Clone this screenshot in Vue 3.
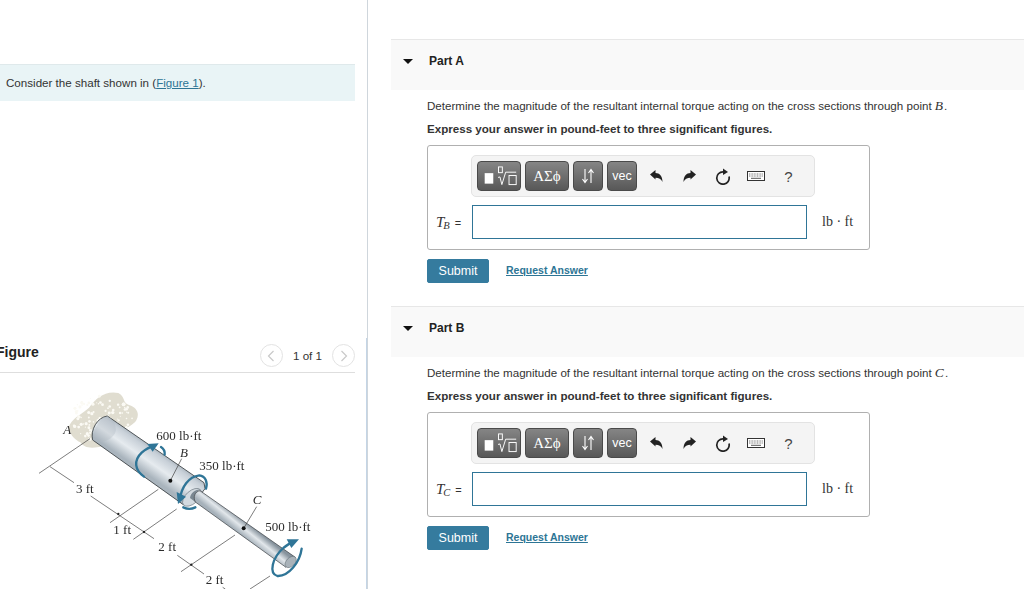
<script setup>
const parts = [
  { name: 'Part A', point: 'B' },
  { name: 'Part B', point: 'C' },
]
let seed = 7
const rnd = () => {
  seed = (seed * 16807) % 2147483647
  return seed / 2147483647
}
const dots = Array.from({ length: 110 }, () => {
  const a = rnd() * 6.283
  const r = Math.sqrt(rnd())
  return { x: 305 + Math.cos(a) * r * 95, y: 265 + Math.sin(a) * r * 68, r: 1.5 + rnd() * 3.5 }
})
</script>

<template>
  <div class="page">
    <section class="left">
      <div class="banner">Consider the shaft shown in (<a class="link">Figure 1</a>).</div>
      <div class="figure">
        <header class="fig-head">
          <h2>Figure</h2>
          <div class="pager">
            <span class="circle">
              <svg width="8" height="12" viewBox="0 0 8 12"><path d="M6.5 1 1.5 6l5 5" /></svg>
            </span>
            <span class="count">1 of 1</span>
            <span class="circle">
              <svg width="8" height="12" viewBox="0 0 8 12"><path d="M1.5 1l5 5-5 5" /></svg>
            </span>
          </div>
        </header>
        <svg class="drawing" width="355" height="216" viewBox="0 129 1065 648">
          <defs>
            <linearGradient id="big" gradientUnits="userSpaceOnUse" x1="478" y1="352" x2="428" y2="424">
              <stop offset="0" stop-color="#9aa6b0" />
              <stop offset="0.25" stop-color="#c8d0d8" />
              <stop offset="0.6" stop-color="#e6ebef" />
              <stop offset="1" stop-color="#a9b4bd" />
            </linearGradient>
            <linearGradient id="small" gradientUnits="userSpaceOnUse" x1="746" y1="582" x2="722" y2="612">
              <stop offset="0" stop-color="#87939d" />
              <stop offset="0.5" stop-color="#e2e7eb" />
              <stop offset="1" stop-color="#a6b1ba" />
            </linearGradient>
          </defs>
          <path d="M205 295c8-32 42-42 62-62 20-28 48-52 88-44 22 12 12 30 32 36 26 8 32 28 22 46-8 14-30 20-40 34-18 22-44 40-72 46-30 6-46 0-56-14-14-6-28-18-36-42z" fill="#e0ddd0" />
          <circle v-for="(d, i) in dots" :key="i" :cx="d.x" :cy="d.y" :r="d.r" fill="#fbfaf4" />
          <g class="dims">
            <path d="M117 430 270 326M150 410 222 458M272 498 462 626M532 676 612 732M668 772 676 777M330 578 475 478M400 628 530 537M543 725 705 615M750 777 810 738" />
          </g>
          <path d="M322 258 612 458 615 476 583 518 550 524 278 330C270 300 292 262 322 258z" fill="url(#big)" stroke="#33383c" stroke-width="2.5" />
          <path d="M322 258C300 262 280 296 278 330 300 340 330 336 345 310 352 296 345 270 322 258z" fill="#aeb8c1" opacity="0.35" />
          <ellipse cx="576" cy="502" rx="34" ry="19" transform="rotate(-42 576 502)" fill="#d3dae0" stroke="#6f7a83" stroke-width="2" />
          <path d="M602 478C586 484 578 500 586 516L570 504C572 490 586 478 602 478z" fill="#7a8791" />
          <path d="M600 482 886 682 858 712 586 516C578 500 586 484 600 482z" fill="url(#small)" stroke="#33383c" stroke-width="2" />
          <ellipse cx="872" cy="696" rx="20" ry="13" transform="rotate(-45 872 696)" fill="#a9b2b9" stroke="#5a646c" stroke-width="1.5" />
          <g class="leaders">
            <path d="M511 452 545 386M731 595 770 530" />
          </g>
          <circle cx="511" cy="452" r="6" fill="#111" />
          <circle cx="731" cy="595" r="6" fill="#111" />
          <circle cx="355" cy="552" r="3.5" fill="#222" />
          <circle cx="432" cy="606" r="3.5" fill="#222" />
          <circle cx="574" cy="704" r="3.5" fill="#222" />
          <g class="torque">
            <path d="M432 440C404 420 400 392 425 368 438 356 452 350 466 346" />
            <path d="M483 351C491 356 495 364 494 374" />
            <path d="M539 510C544 470 566 440 598 436 616 438 624 456 618 476" />
            <path d="M550 532C562 538 574 538 586 532" />
            <path d="M905 656C900 696 866 740 832 738 806 730 816 684 850 654 858 648 866 642 874 638" />
          </g>
          <g fill="#2f7597">
            <path d="M476 340 442 342 458 365z" />
            <path d="M534 522 530 486 558 500z" />
            <path d="M897 628 860 628 874 654z" />
          </g>
          <g class="labels">
            <text x="190" y="311" class="ital">A</text>
            <text x="469" y="330">600 lb·ft</text>
            <text x="540" y="380" class="ital">B</text>
            <text x="598" y="420">350 lb·ft</text>
            <text x="758" y="523" class="ital">C</text>
            <text x="796" y="604">500 lb·ft</text>
            <text x="228" y="490">3 ft</text>
            <text x="340" y="611">1 ft</text>
            <text x="475" y="663">2 ft</text>
            <text x="617" y="762">2 ft</text>
          </g>
        </svg>
      </div>
    </section>

    <main class="right">
      <article v-for="part in parts" :key="part.name" class="part">
        <header class="part-head">
          <svg class="caret" width="10" height="5" viewBox="0 0 10 5"><path d="M0 0h10L5 5z" /></svg>
          <h3>{{ part.name }}</h3>
        </header>
        <div class="part-body">
          <p class="q">Determine the magnitude of the resultant internal torque acting on the cross sections through point <i class="math pt">{{ part.point }}</i>.</p>
          <p class="q strong">Express your answer in pound-feet to three significant figures.</p>
          <div class="answer">
            <div class="toolbar">
              <button class="tbtn b1">
                <svg width="44" height="30" viewBox="0 0 44 30">
                  <rect x="7" y="12" width="9" height="11" fill="#fff" />
                  <rect x="21.500" y="5.500" width="4" height="6" fill="none" stroke="#fff" />
                  <path d="M21 16.500l2-.5 2 8 4-13h11" fill="none" stroke="#fff" />
                  <rect x="32.500" y="14.500" width="7.500" height="9.500" fill="none" stroke="#fff" />
                </svg>
              </button>
              <button class="tbtn b2">ΑΣϕ</button>
              <button class="tbtn b3">
                <svg width="14" height="16" viewBox="0 0 14 16">
                  <path d="M4 1v13M1.500 11 4 14.500 6.500 11M10 15V2M7.500 5 10 1.500 12.500 5" fill="none" stroke="#fff" stroke-width="1.100" />
                </svg>
              </button>
              <button class="tbtn b4">vec</button>
              <div class="tools">
                <span class="tool">
                  <svg width="15" height="14" viewBox="0 0 15 14"><path d="M1 5.500 6.500 1v3c4 0 7 3 7 9-1.500-3-3.500-4.300-7-4.300V10.500z" fill="#222" /></svg>
                </span>
                <span class="tool">
                  <svg width="15" height="14" viewBox="0 0 15 14"><path d="M14 5.500 8.500 1v3c-4 0-7 3-7 9 1.500-3 3.500-4.300 7-4.300V10.500z" fill="#222" /></svg>
                </span>
                <span class="tool">
                  <svg width="16" height="17" viewBox="0 0 16 17"><path d="M8 3.800A6.200 6.200 0 1 0 14 8.500" fill="none" stroke="#222" stroke-width="1.700" /><path d="M8 0.500 13 4 8 7z" fill="#222" /></svg>
                </span>
                <span class="tool">
                  <svg width="18" height="10" viewBox="0 0 18 10">
                    <rect x=".5" y=".5" width="17" height="9" fill="#fff" stroke="#333" />
                    <path d="M2 3h14M2 5h14" stroke="#777" stroke-dasharray="1 .6" />
                    <path d="M4 7.300h10" stroke="#555" />
                  </svg>
                </span>
                <span class="tool help">?</span>
              </div>
            </div>
            <div class="input-row">
              <label class="lhs"><i class="math">T<sub>{{ part.point }}</sub></i><span class="eq">=</span></label>
              <div class="field"></div>
              <span class="units">lb · ft</span>
            </div>
          </div>
          <div class="actions">
            <button class="submit">Submit</button>
            <a class="link reveal">Request Answer</a>
          </div>
        </div>
      </article>
    </main>
  </div>
</template>

<style>
html, body { margin: 0; overflow: hidden; background: #fff; }
</style>

<style scoped>
.page {
  display: flex;
  width: 1024px;
  height: 589px;
  overflow: hidden;
  font-family: "Liberation Sans", Arial, sans-serif;
  font-size: 11.6px;
  color: #333;
}
.left {
  width: 368px;
  flex: none;
  box-sizing: border-box;
  padding-top: 64px;
  border-right: 1px solid #cfd6dc;
}
.banner {
  box-sizing: border-box;
  width: 355px;
  height: 37px;
  padding-left: 6px;
  line-height: 35px;
  background: #e9f4f6;
  border-top: 1px solid #dfe9eb;
}
.link { color: #2d7595; text-decoration: underline; }
.figure {
  margin-top: 237px;
  height: 251px;
  border-right: 1px solid #c4d5e6;
}
.fig-head {
  display: flex;
  justify-content: space-between;
  align-items: center;
  box-sizing: border-box;
  width: 355px;
  height: 35px;
  padding-top: 1px;
  border-bottom: 1px solid #dedede;
}
.fig-head h2 {
  margin: 0 0 0 -4px;
  font-size: 14px;
  line-height: 16px;
  position: relative;
  top: -4px;
  color: #222;
}
.pager { display: flex; align-items: center; gap: 10px; }
.circle {
  display: flex;
  align-items: center;
  justify-content: center;
  box-sizing: border-box;
  width: 23px;
  height: 23px;
  border: 1px solid #e3e3e3;
  border-radius: 50%;
}
.circle path { fill: none; stroke: #c9c9c9; stroke-width: 1.200; }
.count { color: #333; }
.drawing { display: block; filter: blur(0.25px); }
.dims path, .leaders path { fill: none; stroke: #3b3b3b; stroke-width: 2; }
.torque path { fill: none; stroke: #2f7597; stroke-width: 7; stroke-linecap: round; }
.labels text {
  font-family: "Liberation Serif", serif;
  font-size: 39px;
  fill: #2c2c2c;
}
.labels .ital { font-style: italic; }
.right {
  margin-left: 23px;
  width: 633px;
  padding-top: 39px;
}
.part { height: 267px; }
.part-head {
  display: flex;
  align-items: center;
  box-sizing: border-box;
  height: 51px;
  padding: 0 0 8px 12px;
  background: #f9f9f9;
  border-top: 1px solid #e7e7e7;
}
.caret { fill: #111; }
.part-head h3 {
  margin: 0 0 0 16px;
  font-size: 12px;
  font-weight: 700;
  color: #222;
}
.part-body { padding-left: 36px; }
.q { margin: 0; padding-top: 8px; line-height: 16px; }
.strong { padding-top: 7px; font-weight: 700; }
.math { font-family: "Liberation Serif", serif; font-style: italic; }
.pt { font-size: 13.500px; letter-spacing: 1px; }
.answer {
  box-sizing: border-box;
  width: 443px;
  height: 105px;
  margin-top: 8px;
  padding: 9px 0 0 43px;
  border: 1px solid #b0b0b0;
  border-radius: 3px;
}
.toolbar {
  display: flex;
  align-items: center;
  gap: 4px;
  box-sizing: border-box;
  width: 344px;
  height: 42px;
  padding-left: 5px;
  background: #f4f4f4;
  border: 1px solid #e3e3e3;
  border-radius: 5px;
}
.tbtn {
  display: flex;
  align-items: center;
  justify-content: center;
  box-sizing: border-box;
  height: 30px;
  padding: 0;
  color: #fff;
  background: linear-gradient(#858585, #585858);
  border: 1px solid #4a4a4a;
  border-radius: 4px;
}
.b1, .b2 { width: 44px; }
.b3, .b4 { width: 30px; }
.b2 { font-family: "Liberation Serif", serif; font-size: 15px; }
.b4 { font-family: "Liberation Sans", sans-serif; font-size: 12.500px; }
.tools { display: flex; margin-left: -1px; }
.tool {
  display: flex;
  align-items: center;
  justify-content: center;
  width: 33px;
  height: 24px;
}
.help { font-size: 15px; color: #444; }
.input-row {
  display: flex;
  align-items: center;
  height: 34px;
  margin: 8px 0 0 -43px;
}
.lhs {
  display: flex;
  align-items: baseline;
  box-sizing: border-box;
  width: 44px;
  padding-left: 8px;
  white-space: nowrap;
}
.lhs .math { font-size: 15px; }
.lhs sub { font-size: 10.500px; line-height: 0; vertical-align: -2px; margin-left: -1px; }
.eq { margin-left: 5px; font-size: 11px; }
.field {
  box-sizing: border-box;
  width: 335px;
  height: 34px;
  background: #fff;
  border: 1px solid #2f7597;
}
.units {
  margin-left: 15px;
  font-family: "Liberation Serif", serif;
  font-size: 14px;
  color: #333;
  white-space: nowrap;
}
.actions {
  display: flex;
  align-items: center;
  gap: 17px;
  margin-top: 9px;
}
.submit {
  box-sizing: border-box;
  width: 62px;
  height: 24px;
  padding: 0;
  font-family: inherit;
  font-size: 12.500px;
  color: #fff;
  background: #357b9e;
  border: 1px solid #357b9e;
  border-radius: 2px;
}
.reveal { font-size: 10.500px; font-weight: 700; margin-bottom: 2px; }
</style>
